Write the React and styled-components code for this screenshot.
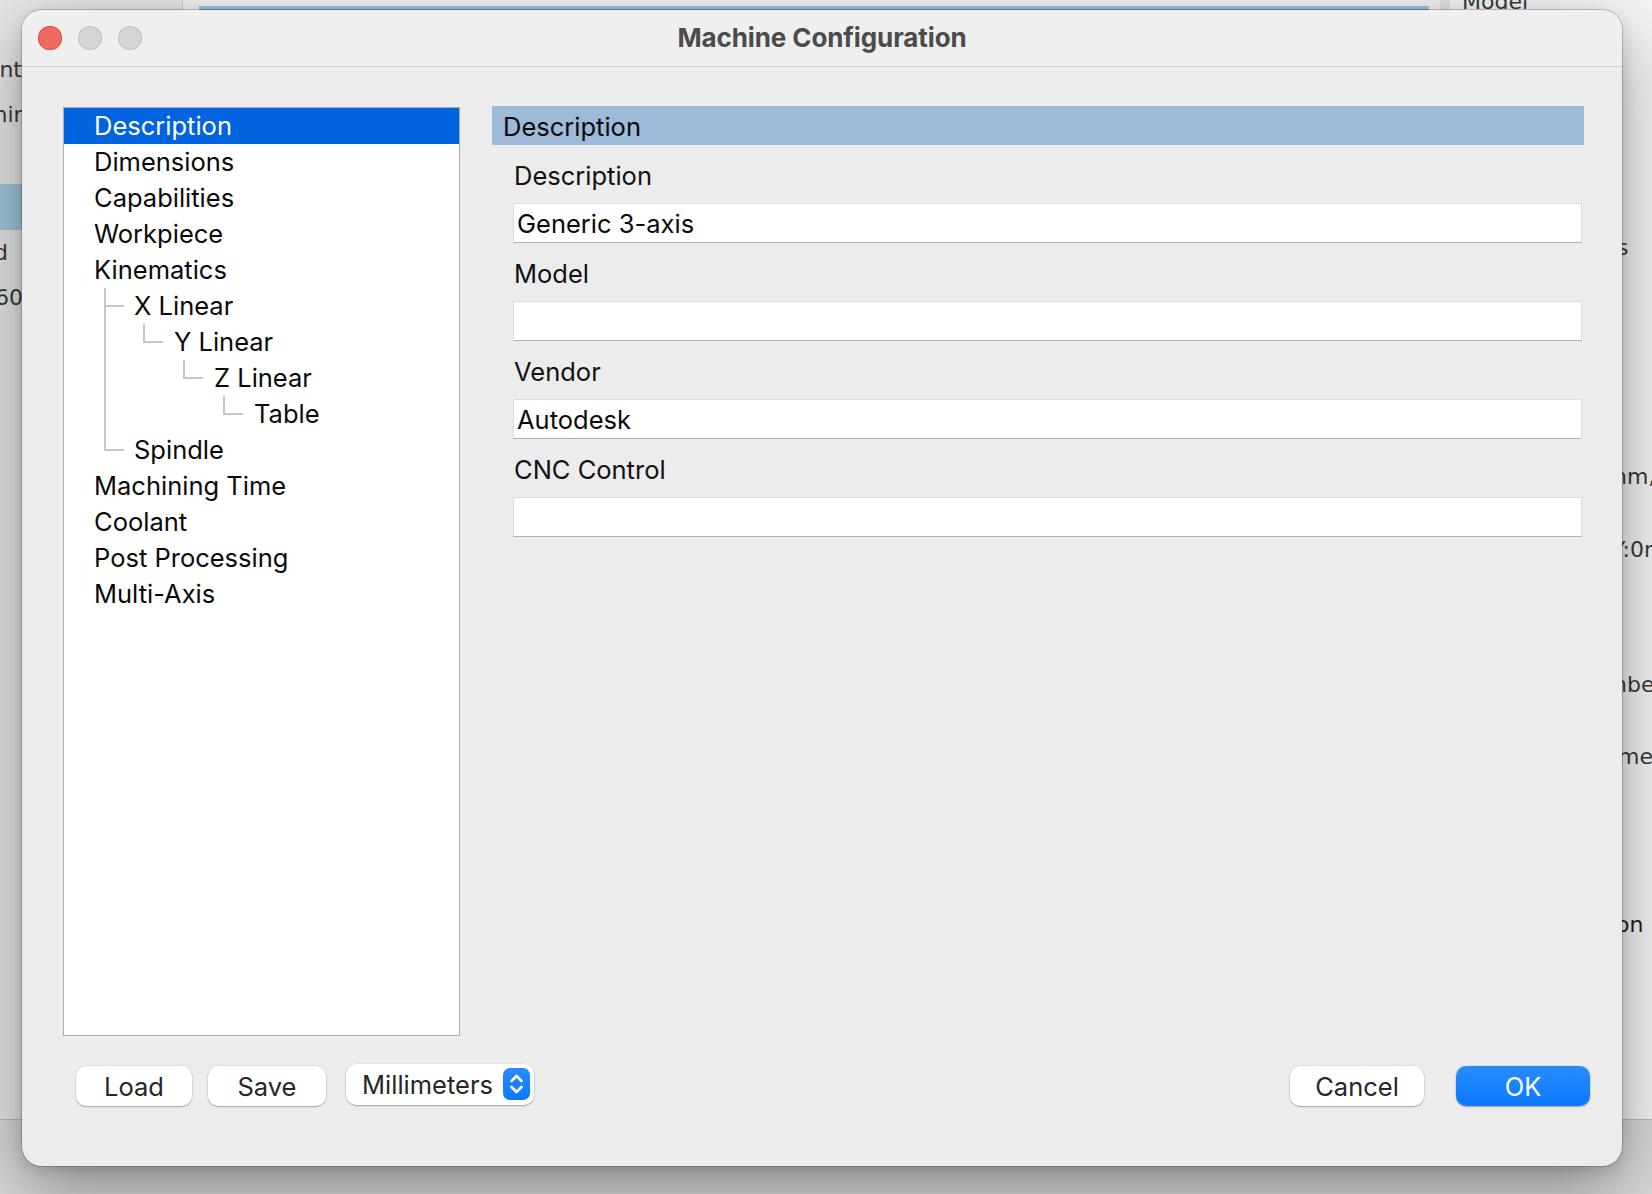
import React from "react";
import styled, { createGlobalStyle } from "styled-components";

const Global = createGlobalStyle`
  html, body { margin: 0; padding: 0; background: #cfcfcf; }
  body { font-family: Inter, "Noto Sans", "Liberation Sans", sans-serif; }
  * { box-sizing: border-box; }
`;

const Desktop = styled.div`
  position: relative;
  width: 1652px;
  height: 1194px;
  overflow: hidden;
  background: linear-gradient(#c9c9c9, #d9d9d9);
`;

/* ---------- the application window behind the dialog ---------- */
const BehindApp = styled.div`
  position: absolute;
  left: 0;
  top: 0;
  width: 1652px;
  height: 1119px;
  display: flex;
  background: #f3f3f3;
  box-shadow: 0 1px 0 #bdbdbd;
`;

const BehindSidebar = styled.div`
  width: 183px;
  background: #e6e6e6;
  border-right: 1px solid #cfcfcf;
  display: flex;
  flex-direction: column;
  padding-top: 184px;
`;

const BehindSelection = styled.div`
  height: 46px;
  background: #a2c9de;
`;

const BehindMain = styled.div`
  flex: 1;
  padding: 6px 0 0 16px;
`;

const BehindBlueLine = styled.div`
  width: 1230px;
  height: 3px;
  background: #98c8e0;
  box-shadow: 0 1px 0 #7a9fb3;
`;

const BehindRight = styled.div`
  width: 212px;
  background: #f5f5f5;
  border-left: 10px solid #e4e4e4;
`;

const BehindText = styled.span`
  position: absolute;
  font-family: "DejaVu Sans", "Liberation Sans", sans-serif;
  font-size: 22px;
  line-height: 28px;
  color: ${(p) => (p.$strong ? "#222" : "#3a3a3a")};
  white-space: nowrap;
  text-align: ${(p) => (p.$alignRight ? "right" : "left")};
`;

/* ---------- dialog window ---------- */
const Window = styled.div`
  position: absolute;
  left: 22px;
  top: 10px;
  width: 1600px;
  height: 1156px;
  border-radius: 20px;
  background: #ececec;
  box-shadow: 0 0 0 1px rgba(0, 0, 0, 0.18), 0 24px 70px rgba(0, 0, 0, 0.38),
    0 4px 14px rgba(0, 0, 0, 0.12);
  display: flex;
  flex-direction: column;
  overflow: hidden;
`;

const TitleBar = styled.div`
  position: relative;
  height: 57px;
  flex: none;
  background: #efefef;
  border-bottom: 1px solid #d1d1d1;
  display: flex;
  align-items: center;
  justify-content: center;
`;

const Lights = styled.div`
  position: absolute;
  left: 16px;
  top: 16px;
  display: flex;
  gap: 16px;
`;

const Light = styled.span`
  width: 24px;
  height: 24px;
  border-radius: 50%;
  background: ${(p) => (p.$red ? "#ee6a5f" : "#d5d5d5")};
  box-shadow: inset 0 0 0 1px ${(p) => (p.$red ? "#d6544a" : "#c3c3c3")};
`;

const Title = styled.div`
  font-size: 26px;
  font-weight: 700;
  color: #4b4b4b;
  letter-spacing: -0.1px;
  margin-top: -2px;
`;

const Body = styled.div`
  display: grid;
  grid-template-columns: 397px 1092px;
  column-gap: 32px;
  padding: 39px 0 0 41px;
  height: 969px;
  flex: none;
`;

const Tree = styled.div`
  margin-top: 1px;
  background: #ffffff;
  border: 1px solid #ababab;
  height: 929px;
  display: flex;
  flex-direction: column;
`;

const Row = styled.div`
  position: relative;
  height: 36px;
  flex: none;
  display: flex;
  align-items: center;
  padding: 0 0 1px ${(p) => 30 + p.$level * 40}px;
  font-size: 25.5px;
  color: ${(p) => (p.$selected ? "#ffffff" : "#0a0a0a")};
  background: ${(p) => (p.$selected ? "#0064e1" : "transparent")};
  white-space: nowrap;
`;

const Guide = styled.span`
  position: absolute;
  left: ${(p) => p.$x}px;
  top: 0;
  width: 2px;
  height: 100%;
  background: #c9c5c1;
`;

const Elbow = styled.span`
  position: absolute;
  left: ${(p) => p.$x}px;
  top: 0;
  width: 20px;
  height: ${(p) => (p.$tee ? "100%" : "19px")};
  border-left: 2px solid #c9c5c1;
  &::after {
    content: "";
    position: absolute;
    left: 0;
    top: 17px;
    width: 18px;
    height: 2px;
    background: #c9c5c1;
  }
`;

const Panel = styled.div`
  display: flex;
  flex-direction: column;
`;

const PanelHeader = styled.div`
  height: 39px;
  background: #9dbad8;
  display: flex;
  align-items: center;
  padding: 2px 0 0 11px;
  font-size: 25.5px;
  color: #0a0a0a;
`;

const FieldLabel = styled.div`
  height: 58px;
  display: flex;
  align-items: center;
  padding: 2px 0 0 22px;
  font-size: 25.5px;
  color: #111;
`;

const Field = styled.div`
  height: 40px;
  margin: 0 2px 0 21px;
  background: #ffffff;
  border: 1px solid #dcdcdc;
  border-bottom-color: #b3b3b3;
  display: flex;
  align-items: center;
  padding: 1px 0 0 3px;
  font-size: 25.5px;
  color: #0a0a0a;
`;

const Footer = styled.div`
  display: flex;
  align-items: center;
  padding: 30px 32px 0 54px;
`;

const ButtonGroup = styled.div`
  display: flex;
  align-items: center;
  gap: ${(p) => p.$gap}px;
`;

const Spacer = styled.div`
  flex: 1;
`;

const Button = styled.button`
  width: ${(p) => p.$w}px;
  height: 40px;
  border: none;
  border-radius: 10px;
  font-family: inherit;
  font-size: 25.5px;
  padding: 0;
  color: ${(p) => (p.$primary ? "#ffffff" : "#262626")};
  background: ${(p) =>
    p.$primary ? "linear-gradient(#2a8bfe, #0a79fe)" : "#ffffff"};
  box-shadow: 0 1px 1.5px rgba(0, 0, 0, 0.28), 0 0 0 0.5px rgba(0, 0, 0, 0.08);
`;

const Popup = styled.div`
  width: 188px;
  height: 41px;
  margin: -4px 0 0 20px;
  border-radius: 10px;
  background: #ffffff;
  box-shadow: 0 1px 1.5px rgba(0, 0, 0, 0.28), 0 0 0 0.5px rgba(0, 0, 0, 0.08);
  display: flex;
  align-items: center;
  justify-content: space-between;
  padding: 0 4px 0 16px;
  font-size: 25.5px;
  color: #262626;
`;

const Stepper = styled.span`
  width: 27px;
  height: 32px;
  border-radius: 7px;
  background: linear-gradient(#2a8bfe, #0a79fe);
  display: flex;
  align-items: center;
  justify-content: center;
`;

const treeRows = [
  { label: "Description", level: 0, selected: true },
  { label: "Dimensions", level: 0 },
  { label: "Capabilities", level: 0 },
  { label: "Workpiece", level: 0 },
  { label: "Kinematics", level: 0 },
  { label: "X Linear", level: 1, elbow: 40, tee: true },
  { label: "Y Linear", level: 2, guides: [40], elbow: 79 },
  { label: "Z Linear", level: 3, guides: [40], elbow: 119 },
  { label: "Table", level: 4, guides: [40], elbow: 159 },
  { label: "Spindle", level: 1, elbow: 40 },
  { label: "Machining Time", level: 0 },
  { label: "Coolant", level: 0 },
  { label: "Post Processing", level: 0 },
  { label: "Multi-Axis", level: 0 },
];

const fields = [
  { label: "Description", value: "Generic 3-axis" },
  { label: "Model", value: "" },
  { label: "Vendor", value: "Autodesk" },
  { label: "CNC Control", value: "" },
];

const behindLeft = [
  { t: "Point", y: 56, end: 22 },
  { t: "Machining", y: 101, left: -51 },
  { t: "Feed", y: 239, end: 8 },
  { t: "2160", y: 284, end: 23 },
];

const behindRight = [
  { t: "Model", x: 1462, y: -12 },
  { t: "s", x: 1617, y: 234 },
  { t: "nm,", x: 1613, y: 463 },
  { t: "Y:0m", x: 1612, y: 536 },
  { t: "nber", x: 1613, y: 671 },
  { t: "me", x: 1618, y: 743 },
  { t: "on", x: 1616, y: 911, strong: true },
];

export default function App() {
  return (
    <Desktop>
      <Global />
      <BehindApp>
        <BehindSidebar>
          <BehindSelection />
        </BehindSidebar>
        <BehindMain>
          <BehindBlueLine />
        </BehindMain>
        <BehindRight />
      </BehindApp>
      {behindLeft.map((b) =>
        b.end !== undefined ? (
          <BehindText
            key={b.t}
            $alignRight
            style={{ left: b.end - 140, width: 140, top: b.y }}
          >
            {b.t}
          </BehindText>
        ) : (
          <BehindText key={b.t} style={{ left: b.left, top: b.y }}>
            {b.t}
          </BehindText>
        )
      )}
      {behindRight.map((b) => (
        <BehindText
          key={b.t}
          $strong={b.strong}
          style={{ left: b.x, top: b.y }}
        >
          {b.t}
        </BehindText>
      ))}

      <Window>
        <TitleBar>
          <Lights>
            <Light $red />
            <Light />
            <Light />
          </Lights>
          <Title>Machine Configuration</Title>
        </TitleBar>

        <Body>
          <Tree>
            {treeRows.map((r) => (
              <Row key={r.label} $level={r.level} $selected={r.selected}>
                {(r.guides || []).map((g) => (
                  <Guide key={g} $x={g} />
                ))}
                {r.elbow !== undefined && <Elbow $x={r.elbow} $tee={r.tee} />}
                {r.label}
              </Row>
            ))}
          </Tree>

          <Panel>
            <PanelHeader>Description</PanelHeader>
            {fields.map((f) => (
              <React.Fragment key={f.label}>
                <FieldLabel>{f.label}</FieldLabel>
                <Field>{f.value}</Field>
              </React.Fragment>
            ))}
          </Panel>
        </Body>

        <Footer>
          <ButtonGroup $gap={16}>
            <Button $w={116}>Load</Button>
            <Button $w={118}>Save</Button>
          </ButtonGroup>
          <Popup>
            Millimeters
            <Stepper>
              <svg width="27" height="32" viewBox="0 0 27 32">
                <path
                  d="M8.5 13 L13.5 8 L18.5 13 M8.5 19 L13.5 24 L18.5 19"
                  fill="none"
                  stroke="#ffffff"
                  strokeWidth="2.6"
                  strokeLinecap="round"
                  strokeLinejoin="round"
                />
              </svg>
            </Stepper>
          </Popup>
          <Spacer />
          <ButtonGroup $gap={32}>
            <Button $w={134}>Cancel</Button>
            <Button $w={134} $primary>
              OK
            </Button>
          </ButtonGroup>
        </Footer>
      </Window>
    </Desktop>
  );
}
